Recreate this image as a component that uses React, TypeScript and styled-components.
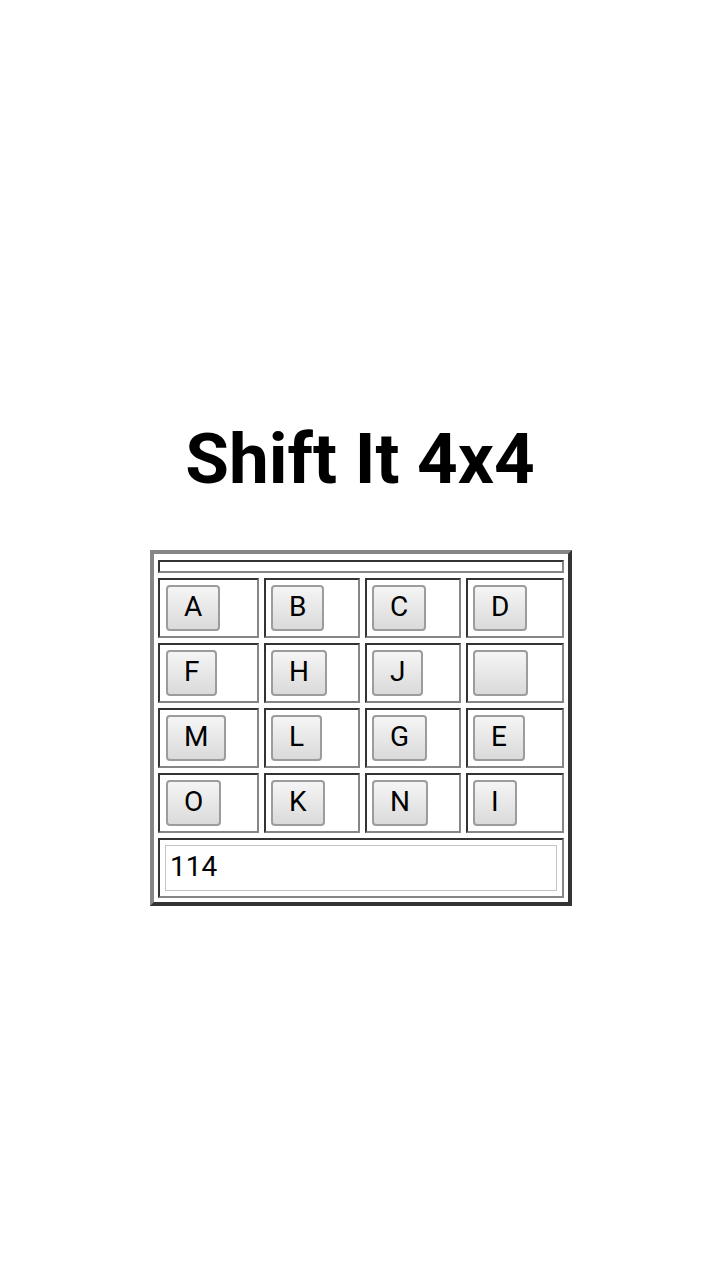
import React from "react";
import styled, { createGlobalStyle } from "styled-components";

const Global = createGlobalStyle`
  html, body { margin: 0; padding: 0; background: #fff; }
  body { font-family: Roboto, "Noto Sans", sans-serif; color: #000; }
`;

const Page = styled.div`
  min-height: 1280px;
  display: flex;
  flex-direction: column;
  align-items: center;
  padding-top: 418px;
  box-sizing: border-box;
`;

const Title = styled.h1`
  margin: 0 0 50px;
  font-family: Roboto, sans-serif;
  font-weight: 700;
  font-size: 71px;
  line-height: 82px;
  color: #000;
`;

const Board = styled.div`
  display: grid;
  grid-template-columns: 101px 96px 96px 98px;
  gap: 5px;
  padding: 6px 4px 4px 4px;
  margin-left: 2px;
  border: 4px solid;
  border-color: #868686 #333 #333 #868686;
  background: #fff;
`;

const Cell = styled.div<{ $span?: boolean; $strip?: boolean; $first?: boolean }>`
  grid-column: ${(p) => (p.$span ? "1 / -1" : "auto")};
  height: ${(p) => (p.$strip ? "13px" : "60px")};
  box-sizing: border-box;
  border: 2px solid;
  border-color: #333 #868686 #868686 #333;
  padding: ${(p) => (p.$strip ? "0" : p.$first ? "0 5px 0 6px" : "0 5px")};
  display: flex;
  align-items: center;
`;

const Tile = styled.button<{ $blank?: boolean }>`
  height: 46px;
  ${(p) => (p.$blank ? "width: 55px;" : "")}
  box-sizing: border-box;
  padding: 0 16px 2px;
  border: 2px solid #9c9c9c;
  border-radius: 4px;
  background: linear-gradient(#f5f5f5, #dadada);
  font-family: Roboto, sans-serif;
  font-size: 28px;
  color: #000;
  line-height: 1;
`;

const Moves = styled.input`
  width: 100%;
  height: 46px;
  box-sizing: border-box;
  border: 1px solid #c4c4c4;
  padding: 0 4px 4px;
  font-family: Roboto, sans-serif;
  font-size: 28px;
  color: #000;
  outline: none;
  background: #fff;
`;

const tiles = ["A", "B", "C", "D", "F", "H", "J", "", "M", "L", "G", "E", "O", "K", "N", "I"];

export default function App() {
  return (
    <>
      <Global />
      <Page>
        <Title>Shift It 4x4</Title>
        <Board>
          <Cell $span $strip />
          {tiles.map((t, i) => (
            <Cell key={i} $first={i % 4 === 0}>
              <Tile $blank={t === ""}>{t}</Tile>
            </Cell>
          ))}
          <Cell $span>
            <Moves readOnly value="114" />
          </Cell>
        </Board>
      </Page>
    </>
  );
}
